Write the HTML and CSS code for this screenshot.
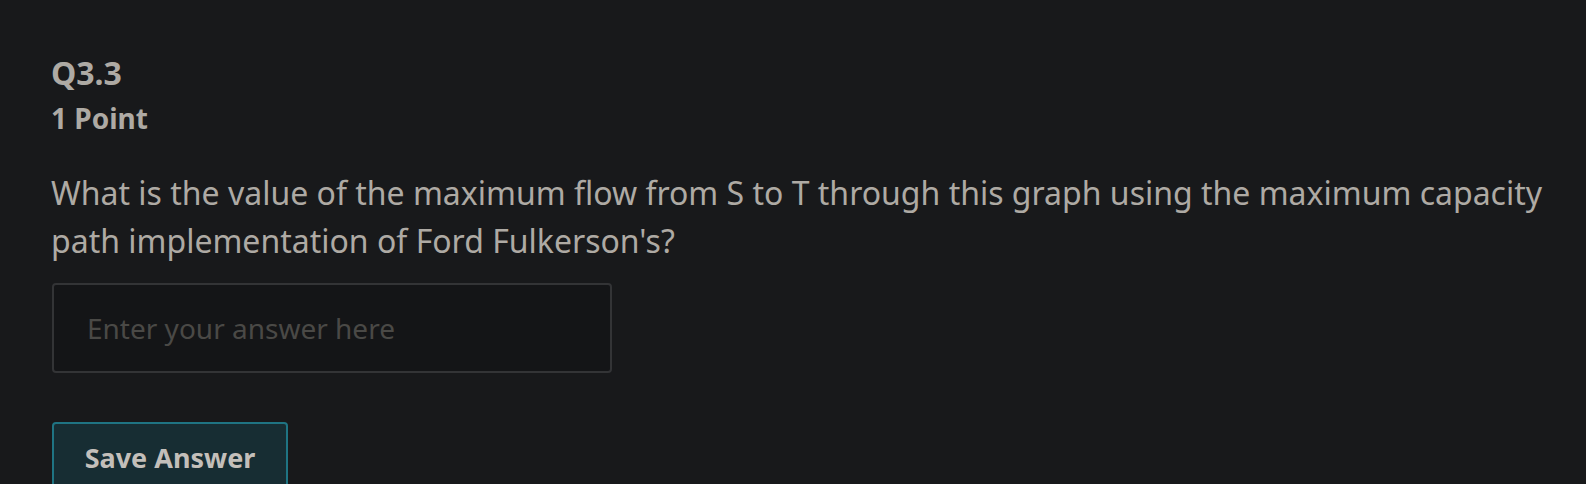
FILE: index.html
```html
<!DOCTYPE html>
<html lang="en">
<head>
<meta charset="utf-8">
<title>Q3.3</title>
<link rel="stylesheet" href="styles.css">
</head>
<body>
<main class="question">
  <h3 class="question-title">Q3.3</h3>
  <div class="question-points">1 Point</div>
  <p class="question-body">What is the value of the maximum flow from S to T through this graph using the maximum capacity path implementation of Ford Fulkerson's?</p>
  <input class="answer-input" type="text" placeholder="Enter your answer here">
  <div class="actions">
    <button class="save-btn" type="button">Save Answer</button>
  </div>
</main>
</body>
</html>
```

FILE: styles.css
```css
html, body {
  margin: 0;
  padding: 0;
  background: #18191b;
  height: 100%;
  overflow: hidden;
}

body {
  font-family: "Noto Sans", "Open Sans", sans-serif;
  color: #aeaaa4;
}

.question {
  padding: 53px 40px 0 51px;
  display: flex;
  flex-direction: column;
  align-items: flex-start;
}

.question-title {
  margin: 0;
  font-size: 32px;
  line-height: 40px;
  font-weight: 700;
  color: #aeaaa4;
}

.question-points {
  margin-top: 7px;
  font-size: 28px;
  line-height: 36px;
  font-weight: 700;
  color: #aeaaa4;
}

.question-body {
  margin: 33px 0 0;
  font-size: 32px;
  line-height: 48px;
  font-weight: 400;
  color: #aeaaa4;
}

.answer-input {
  margin-top: 18px;
  margin-left: 1px;
  box-sizing: border-box;
  width: 560px;
  height: 90px;
  padding: 0 33px;
  background: #141517;
  border: 2px solid #333436;
  border-radius: 4px;
  font-family: "Noto Sans", "Open Sans", sans-serif;
  font-size: 28px;
  color: #aeaaa4;
  outline: none;
}

.answer-input::placeholder {
  color: #4a4946;
}

.actions {
  margin-top: 49px;
  margin-left: 1px;
}

.save-btn {
  box-sizing: border-box;
  width: 236px;
  padding: 14px 0 20px;
  background: #172d33;
  border: 2px solid #1f7483;
  border-radius: 4px;
  font-family: "Noto Sans", "Open Sans", sans-serif;
  font-size: 27px;
  line-height: 40px;
  font-weight: 700;
  color: #c3bfba;
  text-align: center;
}
```
